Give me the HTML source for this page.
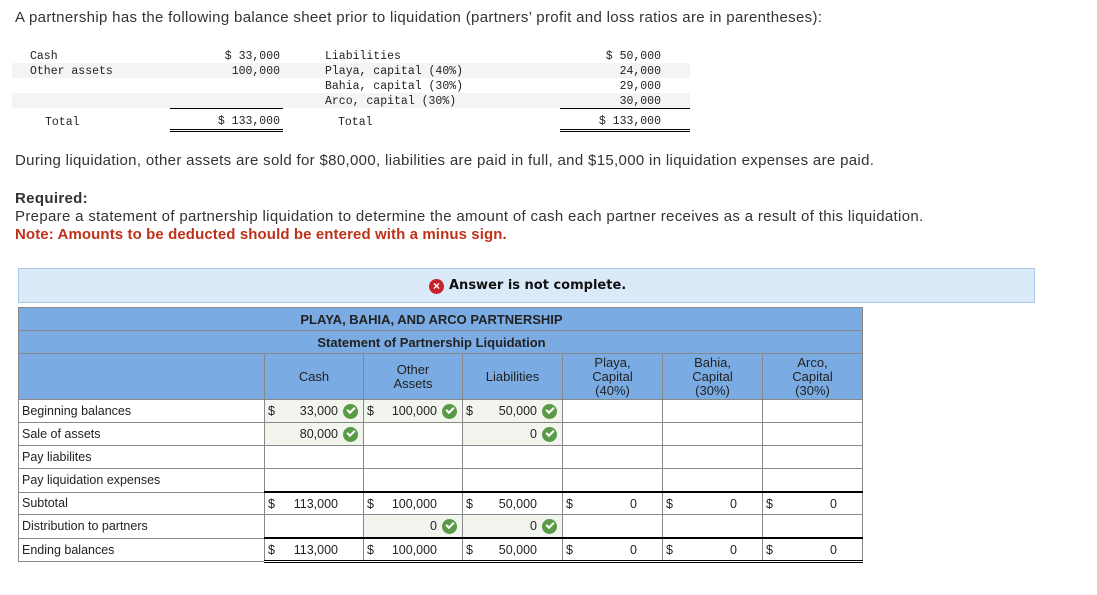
<!DOCTYPE html>
<html><head><meta charset="utf-8"><style>
body{margin:0;width:1097px;height:595px;background:#fff;font-family:"Liberation Sans",Arial,sans-serif;color:#333;position:relative;overflow:hidden}
.t{position:absolute;font-size:15px;white-space:nowrap;letter-spacing:0.33px}
.m{position:absolute;font-family:"Liberation Mono",monospace;font-size:11.5px;color:#222;white-space:nowrap}
.r{text-align:right}
.stripe{position:absolute;left:12px;width:678px;height:15px;background:#f4f4f4}
.ln{position:absolute;border-top:1px solid #000;height:0}
.dl{position:absolute;border-top:3px double #000;height:0}
table{position:absolute;left:18px;top:307px;border-collapse:collapse;font-size:12.5px;color:#222;table-layout:fixed}
td{border:1px solid #888;height:22px;padding:0;position:relative}
.h{background:#7aabe2;text-align:center;font-weight:bold;color:#222;font-size:13px}
.h2{background:#7aabe2;text-align:center;color:#222;font-size:13px;line-height:14px}
.lab{padding-left:3px}
.n{text-align:right;padding-right:25px}
.d{position:absolute;left:3px;top:4px}
.g{background:#f1f5ee}
.ck{position:absolute;right:5px;top:4px;width:15px;height:15px;border-radius:50%;background:#5a9a47}
.ck:after{content:"";position:absolute;left:4px;top:3px;width:6px;height:3px;border-left:2px solid #fff;border-bottom:2px solid #fff;transform:rotate(-45deg)}
.tk td{border-top:2px solid #000;height:21px}
.bot td.v{border-bottom:3px double #000}
</style></head><body>
<div class="t" style="left:15px;top:9px">A partnership has the following balance sheet prior to liquidation (partners’ profit and loss ratios are in parentheses):</div>

<div class="stripe" style="top:63px"></div>
<div class="stripe" style="top:93px"></div>
<div class="m" style="left:30px;top:50px">Cash</div>
<div class="m" style="left:30px;top:65px">Other assets</div>
<div class="m r" style="left:170px;width:110px;top:50px">$ 33,000</div>
<div class="m r" style="left:170px;width:110px;top:65px">100,000</div>
<div class="m" style="left:325px;top:50px">Liabilities</div>
<div class="m" style="left:325px;top:65px">Playa, capital (40%)</div>
<div class="m" style="left:325px;top:80px">Bahia, capital (30%)</div>
<div class="m" style="left:325px;top:95px">Arco, capital (30%)</div>
<div class="m r" style="left:560px;width:101px;top:50px">$ 50,000</div>
<div class="m r" style="left:560px;width:101px;top:65px">24,000</div>
<div class="m r" style="left:560px;width:101px;top:80px">29,000</div>
<div class="m r" style="left:560px;width:101px;top:95px">30,000</div>
<div class="ln" style="left:170px;width:113px;top:108px"></div>
<div class="ln" style="left:560px;width:130px;top:108px"></div>
<div class="m" style="left:45px;top:116px">Total</div>
<div class="m r" style="left:170px;width:110px;top:115px">$ 133,000</div>
<div class="m" style="left:338px;top:116px">Total</div>
<div class="m r" style="left:560px;width:101px;top:115px">$ 133,000</div>
<div class="dl" style="left:170px;width:113px;top:129px"></div>
<div class="dl" style="left:560px;width:130px;top:129px"></div>

<div class="t" style="left:15px;top:152px">During liquidation, other assets are sold for $80,000, liabilities are paid in full, and $15,000 in liquidation expenses are paid.</div>
<div class="t" style="left:15px;top:190px;font-weight:bold">Required:</div>
<div class="t" style="left:15px;top:208px">Prepare a statement of partnership liquidation to determine the amount of cash each partner receives as a result of this liquidation.</div>
<div class="t" style="left:15px;top:226px;font-weight:bold;color:#c0311a;letter-spacing:0.1px">Note: Amounts to be deducted should be entered with a minus sign.</div>

<div style="position:absolute;left:18px;top:268px;width:1015px;height:33px;background:#dbeaf8;border:1px solid #a9c8ea"></div>
<div style="position:absolute;left:429px;top:279px;width:15px;height:15px;border-radius:50%;background:#c8222b;color:#fff;font-size:12px;line-height:15px;text-align:center;font-weight:bold">×</div>
<div class="t" style="left:449px;top:278px;font-weight:bold;color:#111;font-family:'DejaVu Sans',sans-serif;font-size:13px;letter-spacing:0">Answer is not complete.</div>

<table>
<colgroup><col style="width:246px"><col style="width:99px"><col style="width:99px"><col style="width:100px"><col style="width:100px"><col style="width:100px"><col style="width:100px"></colgroup>
<tr><td colspan="7" class="h" style="height:22px"><span style="position:relative;left:-9px">PLAYA, BAHIA, AND ARCO PARTNERSHIP</span></td></tr>
<tr><td colspan="7" class="h" style="height:22px"><span style="position:relative;left:-9px">Statement of Partnership Liquidation</span></td></tr>
<tr style="height:46px"><td class="h2"></td><td class="h2">Cash</td><td class="h2">Other<br>Assets</td><td class="h2">Liabilities</td><td class="h2">Playa,<br>Capital<br>(40%)</td><td class="h2">Bahia,<br>Capital<br>(30%)</td><td class="h2">Arco,<br>Capital<br>(30%)</td></tr>
<tr><td class="lab">Beginning balances</td><td class="n g"><span class="d">$</span>33,000<i class="ck"></i></td><td class="n g"><span class="d">$</span>100,000<i class="ck"></i></td><td class="n g"><span class="d">$</span>50,000<i class="ck"></i></td><td></td><td></td><td></td></tr>
<tr><td class="lab">Sale of assets</td><td class="n g">80,000<i class="ck"></i></td><td></td><td class="n g">0<i class="ck"></i></td><td></td><td></td><td></td></tr>
<tr><td class="lab">Pay liabilites</td><td></td><td></td><td></td><td></td><td></td><td></td></tr>
<tr><td class="lab">Pay liquidation expenses</td><td></td><td></td><td></td><td></td><td></td><td></td></tr>
<tr class="tk"><td class="lab" style="border-top:1px solid #888">Subtotal</td><td class="n"><span class="d">$</span>113,000</td><td class="n"><span class="d">$</span>100,000</td><td class="n"><span class="d">$</span>50,000</td><td class="n"><span class="d">$</span>0</td><td class="n"><span class="d">$</span>0</td><td class="n"><span class="d">$</span>0</td></tr>
<tr><td class="lab">Distribution to partners</td><td></td><td class="n g">0<i class="ck"></i></td><td class="n g">0<i class="ck"></i></td><td></td><td></td><td></td></tr>
<tr class="tk bot"><td class="lab" style="border-top:1px solid #888">Ending balances</td><td class="n v"><span class="d">$</span>113,000</td><td class="n v"><span class="d">$</span>100,000</td><td class="n v"><span class="d">$</span>50,000</td><td class="n v"><span class="d">$</span>0</td><td class="n v"><span class="d">$</span>0</td><td class="n v"><span class="d">$</span>0</td></tr>
</table>
</body></html>
